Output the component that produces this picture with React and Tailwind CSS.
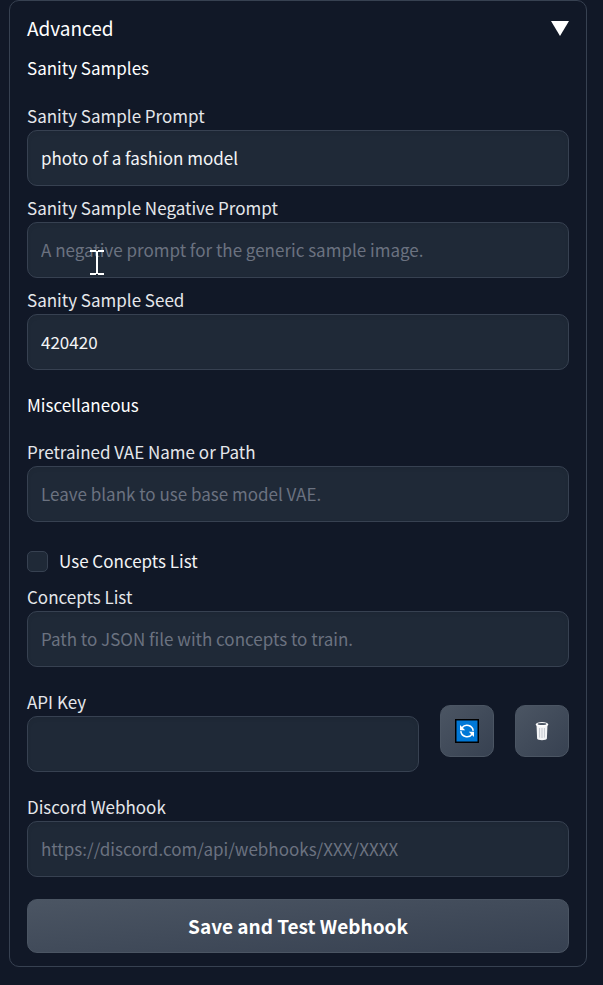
import React, { useState } from 'react';

const inputClass =
  'block w-full h-14 rounded-[10px] border border-[#374151] bg-[#1f2937] px-[13px] pb-[2px] text-[17px] text-[#f3f4f6] placeholder:text-[#6b7280] shadow-inner outline-none focus:border-[#6b7280]';

const iconButtonClass =
  'flex h-[52px] w-[54px] shrink-0 items-center justify-center rounded-[10px] border border-[#4b5563] bg-linear-to-br from-[#4b5563] to-[#374151]';

const Field = ({ id, label, className = '', ...props }) => (
  <div className={className}>
    <label htmlFor={id} className="block pb-[2px] leading-6 text-[#e5e7eb]">
      {label}
    </label>
    <input id={id} type="text" className={inputClass} {...props} />
  </div>
);

const RefreshIcon = () => (
  <svg width="24" height="24" viewBox="0 0 24 24" aria-hidden="true">
    <rect width="24" height="24" fill="#000" />
    <rect x="1.5" y="1.5" width="21" height="21" fill="#0078d7" />
    <g fill="none" stroke="#fff" strokeWidth="1.5">
      <path d="M7 8.800a6.200 6.200 0 0 1 11.200 3" />
      <path d="M17 15.200a6.200 6.200 0 0 1-11.200-3" />
    </g>
    <path d="M5 6v5.200h5.200z" fill="#fff" />
    <path d="M19 18v-5.200h-5.200z" fill="#fff" />
  </svg>
);

const TrashIcon = () => (
  <svg width="14" height="20" viewBox="0 0 14 20" aria-hidden="true">
    <path d="M1.500 3.500h11l-.6 14c0 2.200-9.800 2.200-9.800 0z" fill="#f3f4f6" />
    <path d="M4.600 7v9.600M7 7v10M9.400 7v9.600" stroke="#c3c7ce" strokeWidth="1" />
    <ellipse cx="7" cy="3.400" rx="6.200" ry="2.400" fill="#fff" />
    <ellipse cx="7" cy="3" rx="4.400" ry="1" fill="#4b5563" />
  </svg>
);

const TextCursor = () => (
  <svg
    className="pointer-events-none absolute left-[63px] top-[54px]"
    width="14"
    height="25"
    viewBox="0 0 14 25"
    fill="#fff"
    aria-hidden="true"
  >
    <path d="M0 0h6v1h2V0h6v2H8v21h6v2H8v-1H6v1H0v-2h6V2H0z" />
  </svg>
);

const App = () => {
  const [open, setOpen] = useState(true);
  const [prompt, setPrompt] = useState('photo of a fashion model');
  const [seed, setSeed] = useState('420420');
  const [useConcepts, setUseConcepts] = useState(false);

  return (
    <div className="min-h-screen bg-[#111827] pl-[9px] pr-4 font-['Noto_Sans_CJK_SC',sans-serif] text-[17px] text-white">
      <div className="rounded-[10px] border border-[#374151] px-[17px] pb-[13px] pt-[14px]">
        <button
          type="button"
          className="flex w-full items-center justify-between text-[19px] leading-[26px]"
          aria-expanded={open}
          onClick={() => setOpen(!open)}
        >
          <span>Advanced</span>
          <svg width="18" height="15" viewBox="0 0 18 15" fill="#fff" aria-hidden="true">
            <path d="M0 0h18L9 15z" />
          </svg>
        </button>

        {open && (
          <form className="pt-[15px]" onSubmit={(e) => e.preventDefault()}>
            <h2 className="mb-6 leading-6">Sanity Samples</h2>
            <div className="flex flex-col gap-[10px]">
              <Field
                id="sample-prompt"
                label="Sanity Sample Prompt"
                value={prompt}
                onChange={(e) => setPrompt(e.target.value)}
              />
              <div className="relative">
                <Field
                  id="negative-prompt"
                  label="Sanity Sample Negative Prompt"
                  placeholder="A negative prompt for the generic sample image."
                />
                <TextCursor />
              </div>
              <Field
                id="sample-seed"
                label="Sanity Sample Seed"
                value={seed}
                onChange={(e) => setSeed(e.target.value)}
              />
            </div>

            <h2 className="mb-[23px] mt-[23px] leading-6">Miscellaneous</h2>
            <Field
              id="vae-path"
              label="Pretrained VAE Name or Path"
              placeholder="Leave blank to use base model VAE."
            />
            <label className="mb-3 mt-[27px] flex items-center gap-[11px] leading-6 text-[#f3f4f6]">
              <input
                type="checkbox"
                className="size-[21px] appearance-none rounded-[5px] border border-[#374151] bg-[#1f2937] checked:bg-[#2563eb]"
                checked={useConcepts}
                onChange={(e) => setUseConcepts(e.target.checked)}
              />
              Use Concepts List
            </label>
            <Field
              id="concepts-list"
              label="Concepts List"
              placeholder="Path to JSON file with concepts to train."
            />

            <div className="my-[23px] flex items-center gap-[21px]">
              <Field id="api-key" label="API Key" className="min-w-0 flex-1" />
              <button type="button" className={iconButtonClass} aria-label="Refresh">
                <RefreshIcon />
              </button>
              <button type="button" className={iconButtonClass} aria-label="Delete">
                <TrashIcon />
              </button>
            </div>

            <Field
              id="discord-webhook"
              label="Discord Webhook"
              placeholder="https://discord.com/api/webhooks/XXX/XXXX"
            />
            <button
              type="submit"
              className="mt-[22px] h-[54px] w-full rounded-[10px] border border-[#4b5563] bg-linear-to-br from-[#4b5563] to-[#374151] text-[19px] font-bold"
            >
              Save and Test Webhook
            </button>
          </form>
        )}
      </div>
    </div>
  );
};

export default App;
